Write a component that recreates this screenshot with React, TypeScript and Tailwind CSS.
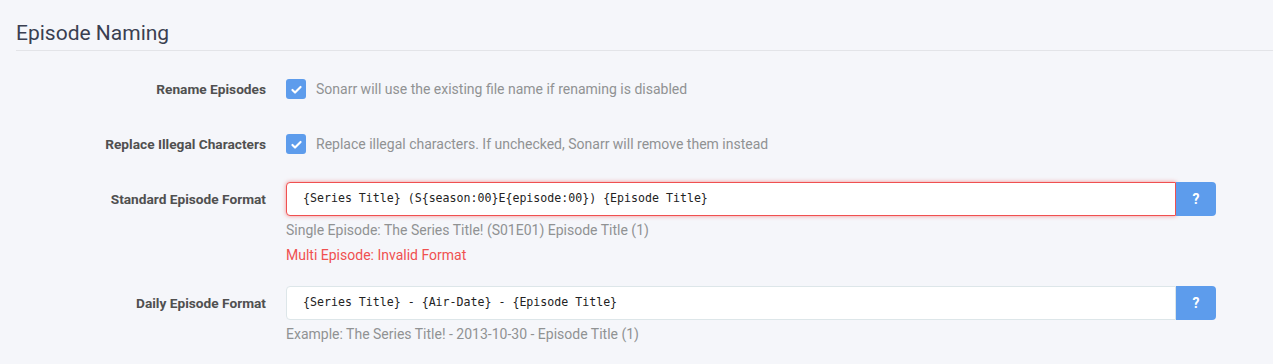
import React from "react";

function Check() {
  return (
    <span className="flex h-5 w-5 items-center justify-center rounded-[3px] bg-[#5d9cec]">
      <svg width="13" height="13" viewBox="0 0 16 16" fill="none">
        <path d="M3 8.5l3.2 3.2L13 4.8" stroke="#fff" strokeWidth="2.6" strokeLinecap="round" strokeLinejoin="round" />
      </svg>
    </span>
  );
}

function Label({ children }: { children: React.ReactNode }) {
  return <div className="w-[270px] shrink-0 pr-5 text-right text-[13.7px] font-bold text-[#505050]">{children}</div>;
}

function FormatInput({ value, invalid }: { value: string; invalid?: boolean }) {
  return (
    <div className="flex h-[34px]">
      <div
        className={
          invalid
            ? "flex flex-1 items-center rounded-l-[4px] border border-[#f05050] bg-white pl-4 shadow-[0_0_4px_rgba(240,80,80,0.6)]"
            : "flex flex-1 items-center rounded-l-[4px] border border-[#dde6e9] bg-white pl-4"
        }
      >
        <span className="font-['DejaVu_Sans_Mono',monospace] text-[11.6px] text-[#222]">{value}</span>
      </div>
      <button className="w-10 rounded-r-[4px] bg-[#5d9cec] text-[14px] font-bold text-white">?</button>
    </div>
  );
}

export default function App() {
  return (
    <div className="min-h-[364px] bg-[#f5f6fa] pl-4 font-['Roboto',sans-serif]">
      <div className="border-b border-[#e3e4e8] pt-[18px] pb-[2px] text-[21px] leading-[30px] text-[#3a3f51]">
        Episode Naming
      </div>
      <div className="pr-[57px] pt-[21px]">
        <div className="mb-[21px] flex h-[34px] items-center">
          <Label>Rename Episodes</Label>
          <div className="flex items-center gap-[10px]">
            <Check />
            <span className="text-[14px] text-[#909293]">Sonarr will use the existing file name if renaming is disabled</span>
          </div>
        </div>
        <div className="mb-[21px] flex h-[34px] items-center">
          <Label>Replace Illegal Characters</Label>
          <div className="flex items-center gap-[10px]">
            <Check />
            <span className="text-[14px] text-[#909293]">Replace illegal characters. If unchecked, Sonarr will remove them instead</span>
          </div>
        </div>
        <div className="mb-[21px] flex">
          <div className="flex h-[34px] items-center">
            <Label>Standard Episode Format</Label>
          </div>
          <div className="flex-1">
            <FormatInput value="{Series Title} (S{season:00}E{episode:00}) {Episode Title}" invalid />
            <div className="mt-1 text-[14px] leading-5 text-[#909293]">Single Episode: The Series Title! (S01E01) Episode Title (1)</div>
            <div className="mt-[5px] text-[14px] leading-5 text-[#f05050]">Multi Episode: Invalid Format</div>
          </div>
        </div>
        <div className="flex">
          <div className="flex h-[34px] items-center">
            <Label>Daily Episode Format</Label>
          </div>
          <div className="flex-1">
            <FormatInput value="{Series Title} - {Air-Date} - {Episode Title}" />
            <div className="mt-1 text-[14px] leading-5 text-[#909293]">Example: The Series Title! - 2013-10-30 - Episode Title (1)</div>
          </div>
        </div>
      </div>
    </div>
  );
}
